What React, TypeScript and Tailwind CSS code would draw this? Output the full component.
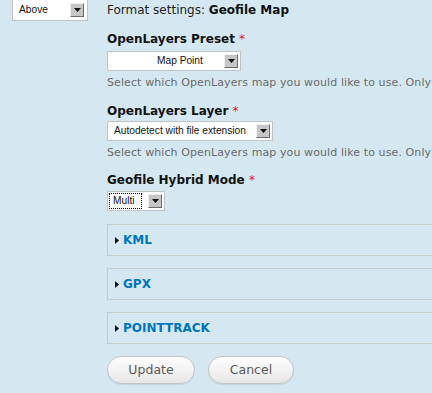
import React from 'react';

const ArrowBox: React.FC = () => (
  <span className="flex h-[14px] w-[14px] items-center justify-center border border-t-[#f0f0f0] border-l-[#f0f0f0] border-b-[#6b6b6b] border-r-[#6b6b6b] bg-[#c6c6c6]">
    <svg width="7" height="4" viewBox="0 0 7 4">
      <path d="M0 0h7L3.5 4z" fill="#111" />
    </svg>
  </span>
);

interface FakeSelectProps {
  width: string;
  children: React.ReactNode;
}

const FakeSelect: React.FC<FakeSelectProps> = ({ width, children }) => (
  <div
    className={`${width} flex h-[20px] items-center justify-between border border-[#c2c2c2] bg-white pr-[2px] font-['Liberation_Sans',Arial,sans-serif] text-[10.2px] text-[#111]`}
  >
    {children}
    <ArrowBox />
  </div>
);

const Label: React.FC<{ text: string; className?: string }> = ({ text, className }) => (
  <div className={`h-[17px] text-[12px] font-bold leading-[17px] text-[#111] ${className ?? ''}`}>
    {text} <span className="font-normal text-[#e81818]">*</span>
  </div>
);

const Help: React.FC<{ className?: string }> = ({ className }) => (
  <div className={`h-[14px] whitespace-nowrap text-[11px] leading-[14px] tracking-[0.1px] text-[#6a6a6a] ${className ?? ''}`}>
    Select which OpenLayers map you would like to use. Only
  </div>
);

const Fieldset: React.FC<{ title: string; className?: string }> = ({ title, className }) => (
  <div className={`flex h-[32px] w-[360px] items-center border border-[#c8c8c8] pl-[7px] ${className ?? ''}`}>
    <svg width="4" height="7" viewBox="0 0 4 7" className="mr-[4px]">
      <path d="M0 0v7l4-3.5z" fill="#111" />
    </svg>
    <span className="text-[12px] font-bold text-[#0074bd]">{title}</span>
  </div>
);

export default function App() {
  return (
    <div className="flex h-[393px] w-[432px] overflow-hidden bg-[#d5e8f2] font-['DejaVu_Sans',sans-serif]">
      <div className="w-[107px] shrink-0 pl-[12px]">
        <div className="flex h-[21px] w-[76px] items-center justify-between border border-[#c2c2c2] border-t-0 bg-white pl-[6px] pr-[3px] font-['Liberation_Sans',Arial,sans-serif] text-[10.2px] text-[#111]">
          <span>Above</span>
          <ArrowBox />
        </div>
      </div>

      <div className="min-w-0 flex-1">
        <div className="h-[20px] whitespace-nowrap text-[12px] leading-[20px] text-[#222]">
          Format settings: <span className="font-bold text-[#111]">Geofile Map</span>
        </div>

        <Label text="OpenLayers Preset" className="mt-[11px]" />
        <div className="mt-[3px]">
          <FakeSelect width="w-[134px]">
            <span className="pl-[49px]">Map Point</span>
          </FakeSelect>
        </div>
        <Help className="mt-[5px]" />

        <Label text="OpenLayers Layer" className="mt-[13px]" />
        <div className="mt-[1px]">
          <FakeSelect width="w-[166px]">
            <span className="pl-[6px]">Autodetect with file extension</span>
          </FakeSelect>
        </div>
        <Help className="mt-[5px]" />

        <Label text="Geofile Hybrid Mode" className="mt-[12px]" />
        <div className="mt-[2px]">
          <FakeSelect width="w-[58px]">
            <span className="ml-[1px] border border-dotted border-black px-[3px] pr-[6px] leading-[14px]">Multi</span>
          </FakeSelect>
        </div>

        <Fieldset title="KML" className="mt-[13px]" />
        <Fieldset title="GPX" className="mt-[12px]" />
        <Fieldset title="POINTTRACK" className="mt-[12px]" />

        <div className="mt-[12px] flex gap-[13px]">
          <button className="h-[28px] w-[88px] rounded-full border border-[#c4c4c4] bg-gradient-to-b from-white to-[#e6e6e6] text-[12.5px] text-[#5a5a5a] shadow-[0_1px_1px_rgba(0,0,0,0.08)]">
            Update
          </button>
          <button className="h-[28px] w-[86px] rounded-full border border-[#c4c4c4] bg-gradient-to-b from-white to-[#e6e6e6] text-[12.5px] text-[#5a5a5a] shadow-[0_1px_1px_rgba(0,0,0,0.08)]">
            Cancel
          </button>
        </div>
      </div>
    </div>
  );
}
